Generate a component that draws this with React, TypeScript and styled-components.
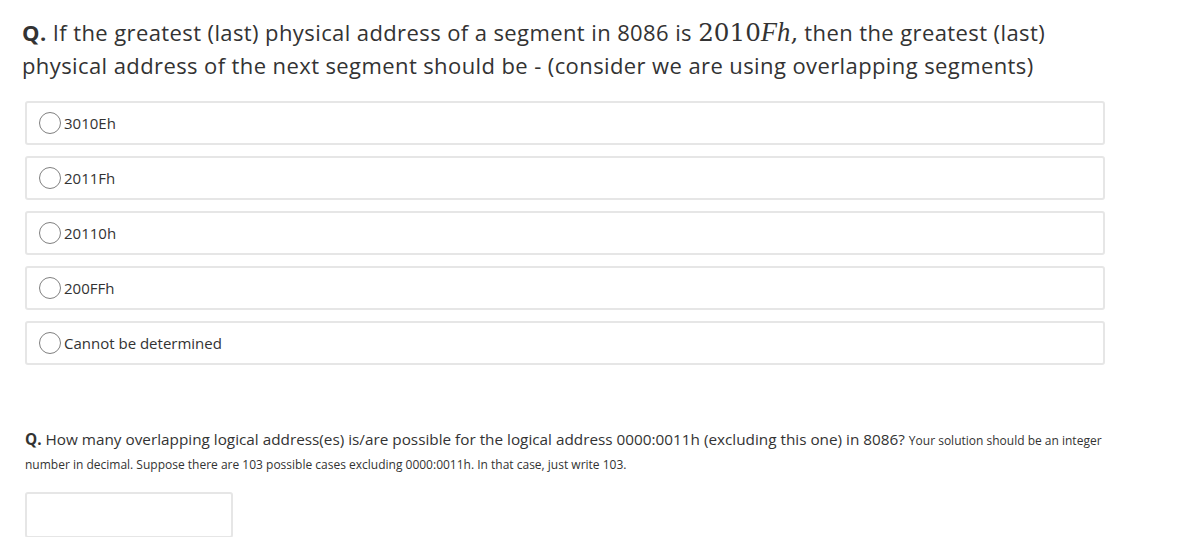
import React from "react";
import styled, { createGlobalStyle } from "styled-components";

const Global = createGlobalStyle`
  html, body { margin: 0; padding: 0; background: #fff; }
  body { font-family: "Open Sans", "Noto Sans", sans-serif; color: #333; }
`;

const Page = styled.div`
  padding: 16px 0 0 22px;
  width: 1090px;
`;

const Question = styled.div<{ $size: number; $lh: number; $ls?: number; $w?: number }>`
  font-size: ${(p) => p.$size}px;
  line-height: ${(p) => p.$lh}px;
  letter-spacing: ${(p) => p.$ls ?? 0}px;
  width: ${(p) => (p.$w ? `${p.$w}px` : "auto")};
  color: #333;
`;

const QMark = styled.b`
  font-weight: 700;
`;

const MathNum = styled.span`
  font-family: "DejaVu Serif", "Liberation Serif", serif;
  font-size: 1.12em;
  letter-spacing: 0;
  line-height: 1;
`;

const MathIt = styled.i`
  font-family: "Liberation Serif", serif;
  font-style: italic;
  font-size: 1.08em;
`;

const Options = styled.div`
  display: flex;
  flex-direction: column;
  gap: 11px;
  margin: 19px 0 0 3px;
  width: 1080px;
`;

const Option = styled.label`
  display: flex;
  align-items: center;
  box-sizing: border-box;
  height: 44px;
  border: 2px solid #e6e6e6;
  border-radius: 3px;
  padding-left: 12px;
  font-size: 15px;
  color: #333;
  cursor: pointer;
`;

const Radio = styled.span`
  display: inline-block;
  box-sizing: border-box;
  width: 22px;
  height: 22px;
  border: 1px solid #808080;
  border-radius: 50%;
  margin-right: 3px;
  background: #fff;
`;

const Small = styled.span`
  font-size: 12px;
`;

const Q2 = styled(Question)`
  margin-top: 63px;
  margin-left: 3px;
`;

const Input = styled.input`
  display: block;
  box-sizing: border-box;
  width: 208px;
  height: 46px;
  margin: 16px 0 0 3px;
  border: 2px solid #e6e6e6;
  border-radius: 3px;
  background: #fff;
  outline: none;
`;

const opts = ["3010Eh", "2011Fh", "20110h", "200FFh", "Cannot be determined"];

export default function App() {
  return (
    <>
      <Global />
      <Page>
        <Question $size={22} $lh={33} $ls={0.4} $w={1045}>
          <QMark>Q.</QMark> If the greatest (last) physical address of a segment in 8086 is{" "}
          <MathNum>
            2010<MathIt>Fh</MathIt>,
          </MathNum>{" "}
          then the greatest (last) physical address of the next segment should be - (consider we are using
          overlapping segments)
        </Question>
        <Options>
          {opts.map((o) => (
            <Option key={o}>
              <Radio />
              {o}
            </Option>
          ))}
        </Options>
        <Q2 $size={15.3} $lh={23}>
          <QMark>Q.</QMark> How many overlapping logical address(es) is/are possible for the logical address
          0000:0011h (excluding this one) in 8086?{" "}
          <Small>
            Your solution should be an integer number in decimal. Suppose there are 103 possible cases excluding
            0000:0011h. In that case, just write 103.
          </Small>
        </Q2>
        <Input type="text" />
      </Page>
    </>
  );
}
